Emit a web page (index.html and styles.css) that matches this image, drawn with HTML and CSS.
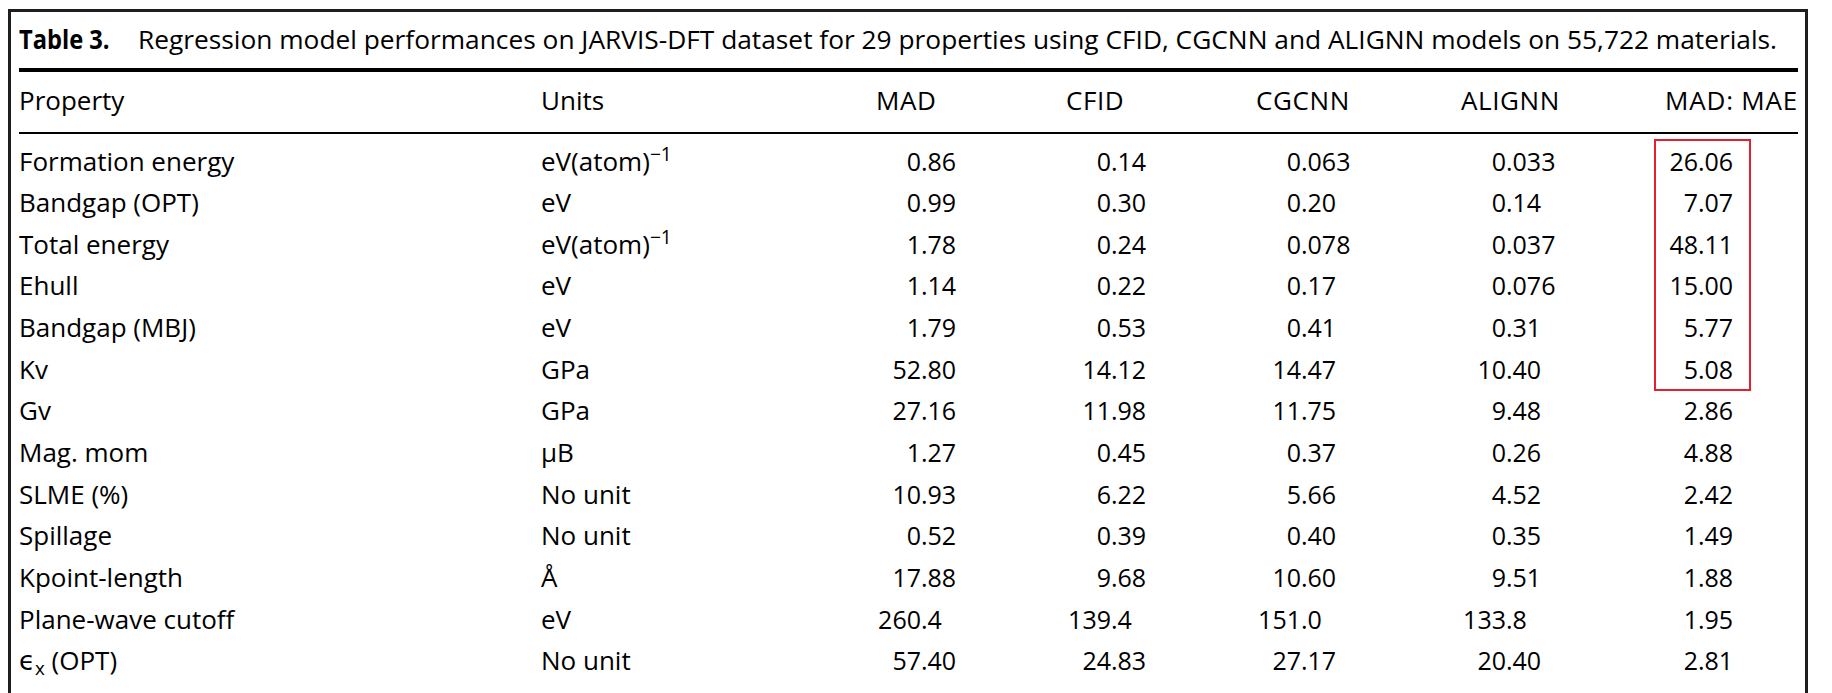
FILE: index.html
```html
<!DOCTYPE html>
<html lang="en">
<head>
<meta charset="utf-8">
<title>Table 3</title>
<link rel="stylesheet" href="styles.css">
</head>
<body>
<div class="frame">
  <div class="caption"><span class="label"><b>Table 3.</b></span><span class="ctext">Regression model performances on JARVIS-DFT dataset for 29 properties using CFID, CGCNN and ALIGNN models on 55,722 materials.</span></div>
  <div class="rule-thick"></div>
  <div class="grid head">
    <div class="t">Property</div>
    <div class="t">Units</div>
    <div class="h">MAD</div>
    <div class="h">CFID</div>
    <div class="h">CGCNN</div>
    <div class="h">ALIGNN</div>
    <div class="h last">MAD: MAE</div>
  </div>
  <div class="rule-thin"></div>
  <div class="body">
    <div class="grid row"><div class="t">Formation energy</div><div class="t">eV(atom)<sup>−1</sup></div><div class="n"><span class="i">0</span>.86</div><div class="n"><span class="i">0</span>.14</div><div class="n"><span class="i">0</span>.063</div><div class="n"><span class="i">0</span>.033</div><div class="n"><span class="i">26</span>.06</div></div>
    <div class="grid row"><div class="t">Bandgap (OPT)</div><div class="t">eV</div><div class="n"><span class="i">0</span>.99</div><div class="n"><span class="i">0</span>.30</div><div class="n"><span class="i">0</span>.20</div><div class="n"><span class="i">0</span>.14</div><div class="n"><span class="i">7</span>.07</div></div>
    <div class="grid row"><div class="t">Total energy</div><div class="t">eV(atom)<sup>−1</sup></div><div class="n"><span class="i">1</span>.78</div><div class="n"><span class="i">0</span>.24</div><div class="n"><span class="i">0</span>.078</div><div class="n"><span class="i">0</span>.037</div><div class="n"><span class="i">48</span>.11</div></div>
    <div class="grid row"><div class="t">Ehull</div><div class="t">eV</div><div class="n"><span class="i">1</span>.14</div><div class="n"><span class="i">0</span>.22</div><div class="n"><span class="i">0</span>.17</div><div class="n"><span class="i">0</span>.076</div><div class="n"><span class="i">15</span>.00</div></div>
    <div class="grid row"><div class="t">Bandgap (MBJ)</div><div class="t">eV</div><div class="n"><span class="i">1</span>.79</div><div class="n"><span class="i">0</span>.53</div><div class="n"><span class="i">0</span>.41</div><div class="n"><span class="i">0</span>.31</div><div class="n"><span class="i">5</span>.77</div></div>
    <div class="grid row"><div class="t">Kv</div><div class="t">GPa</div><div class="n"><span class="i">52</span>.80</div><div class="n"><span class="i">14</span>.12</div><div class="n"><span class="i">14</span>.47</div><div class="n"><span class="i">10</span>.40</div><div class="n"><span class="i">5</span>.08</div></div>
    <div class="grid row"><div class="t">Gv</div><div class="t">GPa</div><div class="n"><span class="i">27</span>.16</div><div class="n"><span class="i">11</span>.98</div><div class="n"><span class="i">11</span>.75</div><div class="n"><span class="i">9</span>.48</div><div class="n"><span class="i">2</span>.86</div></div>
    <div class="grid row"><div class="t">Mag. mom</div><div class="t">μB</div><div class="n"><span class="i">1</span>.27</div><div class="n"><span class="i">0</span>.45</div><div class="n"><span class="i">0</span>.37</div><div class="n"><span class="i">0</span>.26</div><div class="n"><span class="i">4</span>.88</div></div>
    <div class="grid row"><div class="t">SLME (%)</div><div class="t">No unit</div><div class="n"><span class="i">10</span>.93</div><div class="n"><span class="i">6</span>.22</div><div class="n"><span class="i">5</span>.66</div><div class="n"><span class="i">4</span>.52</div><div class="n"><span class="i">2</span>.42</div></div>
    <div class="grid row"><div class="t">Spillage</div><div class="t">No unit</div><div class="n"><span class="i">0</span>.52</div><div class="n"><span class="i">0</span>.39</div><div class="n"><span class="i">0</span>.40</div><div class="n"><span class="i">0</span>.35</div><div class="n"><span class="i">1</span>.49</div></div>
    <div class="grid row"><div class="t">Kpoint-length</div><div class="t">Å</div><div class="n"><span class="i">17</span>.88</div><div class="n"><span class="i">9</span>.68</div><div class="n"><span class="i">10</span>.60</div><div class="n"><span class="i">9</span>.51</div><div class="n"><span class="i">1</span>.88</div></div>
    <div class="grid row"><div class="t">Plane-wave cutoff</div><div class="t">eV</div><div class="n"><span class="i">260</span>.4</div><div class="n"><span class="i">139</span>.4</div><div class="n"><span class="i">151</span>.0</div><div class="n"><span class="i">133</span>.8</div><div class="n"><span class="i">1</span>.95</div></div>
    <div class="grid row"><div class="t">ϵ<sub>x</sub> (OPT)</div><div class="t">No unit</div><div class="n"><span class="i">57</span>.40</div><div class="n"><span class="i">24</span>.83</div><div class="n"><span class="i">27</span>.17</div><div class="n"><span class="i">20</span>.40</div><div class="n"><span class="i">2</span>.81</div></div>
    <div class="highlight"></div>
  </div>
</div>
</body>
</html>
```

FILE: styles.css
```css
html, body {
  margin: 0;
  padding: 0;
  background: #ffffff;
  overflow: hidden;
}

body {
  font-family: "Open Sans", "DejaVu Sans", sans-serif;
  font-size: 26px;
  color: #000000;
}

.frame {
  box-sizing: border-box;
  margin: 9px 0 0 8px;
  width: 1800px;
  height: 684px;
  border: 3px solid #1e1e1e;
  border-bottom: none;
  padding: 0 7px 0 8px;
}

.caption {
  height: 54px;
  line-height: 54px;
  margin-bottom: 2px;
  display: flex;
  white-space: nowrap;
  font-size: 26.3px;
}

.caption .label {
  width: 119px;
  flex: none;
}

.caption .label b {
  display: inline-block;
  font-weight: 700;
  transform: scaleX(0.9);
  transform-origin: 0 50%;
}

.rule-thick {
  height: 4px;
  background: #000000;
}

.rule-thin {
  height: 2px;
  background: #000000;
}

.grid {
  display: grid;
  grid-template-columns: 522px 260px 190px 190px 205px 192px 1fr;
  white-space: nowrap;
}

.head {
  height: 60px;
  line-height: 57px;
}

.head .h {
  padding-left: 75px;
  letter-spacing: 0.6px;
}

.head .h.last {
  padding-left: 0;
  text-align: right;
  letter-spacing: 0.8px;
}

.body {
  position: relative;
  padding-top: 6.5px;
}

.row {
  height: 41.667px;
  line-height: 41.667px;
}

.n {
  font-size: 25px;
}

.n .i {
  display: inline-block;
  width: 120px;
  text-align: right;
}

sup {
  font-size: 0.74em;
  line-height: 0;
  vertical-align: 0.5em;
}

sub {
  font-size: 0.72em;
  line-height: 0;
  vertical-align: -0.25em;
}

.highlight {
  position: absolute;
  left: 1635px;
  top: 5px;
  width: 97px;
  height: 252px;
  box-sizing: border-box;
  border: 2px solid #e5202a;
}
```
